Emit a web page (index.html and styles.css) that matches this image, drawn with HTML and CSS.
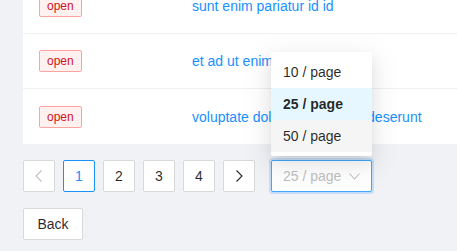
FILE: index.html
```html
<!DOCTYPE html>
<html>

<head>
    <title>Issues</title>
    <link rel="stylesheet" href="styles.css">
</head>

<body>
    <div class="page">
        <div class="table">
            <div class="row">
                <div class="cell"><span class="tag">open</span></div>
                <div class="cell"><a href="#">sunt enim pariatur id id</a></div>
            </div>
            <div class="row">
                <div class="cell"><span class="tag">open</span></div>
                <div class="cell"><a href="#">et ad ut enim minim</a></div>
            </div>
            <div class="row">
                <div class="cell"><span class="tag">open</span></div>
                <div class="cell"><a href="#">voluptate dolore cillum irure deserunt</a></div>
            </div>
        </div>

        <div class="pagination">
            <button class="page-item disabled">
                <svg width="8" height="12" viewBox="0 0 8 12"><polyline points="6.5,0.5 1,6 6.5,11.5" /></svg>
            </button>
            <button class="page-item active">1</button>
            <button class="page-item">2</button>
            <button class="page-item">3</button>
            <button class="page-item">4</button>
            <button class="page-item">
                <svg width="8" height="12" viewBox="0 0 8 12"><polyline points="1.5,0.5 7,6 1.5,11.5" /></svg>
            </button>

            <div class="size-select">
                <div class="select-box">
                    <span class="select-value">25 / page</span>
                    <svg class="select-arrow" width="11" height="7" viewBox="0 0 11 7"><polyline points="0.5,0.5 5.5,6 10.5,0.5" /></svg>
                </div>
                <ul class="dropdown">
                    <li>10 / page</li>
                    <li class="selected">25 / page</li>
                    <li class="hovered">50 / page</li>
                </ul>
            </div>
        </div>

        <button class="btn">Back</button>
    </div>
</body>

</html>
```

FILE: styles.css
```css
body {
    margin: 0;
    background: #f0f2f5;
    font-family: "Liberation Sans", Arial, sans-serif;
    font-size: 14px;
    color: rgba(0, 0, 0, 0.85);
    overflow: hidden;
}

.page {
    padding-left: 23px;
}

.table {
    background: #fff;
    margin-top: -21px;
}

.row {
    display: grid;
    grid-template-columns: 153px 1fr;
    border-bottom: 1px solid #f0f0f0;
}

.row:last-child {
    border-bottom: none;
}

.cell {
    padding: 16px;
    height: 22px;
    display: flex;
    align-items: center;
    white-space: nowrap;
}

.row:last-child .cell {
    height: 23px;
}

.tag {
    display: inline-block;
    box-sizing: border-box;
    height: 22px;
    line-height: 20px;
    padding: 0 7px;
    font-size: 12px;
    color: #cf1322;
    background: #fff1f0;
    border: 1px solid #ffa39e;
    border-radius: 2px;
}

a {
    color: #1890ff;
    text-decoration: none;
}

.pagination {
    display: flex;
    gap: 8px;
    margin-top: 16px;
}

.page-item {
    box-sizing: border-box;
    width: 32px;
    height: 32px;
    padding: 0;
    border: 1px solid #d9d9d9;
    border-radius: 2px;
    background: #fff;
    font-family: inherit;
    font-size: 14px;
    color: rgba(0, 0, 0, 0.85);
    display: flex;
    align-items: center;
    justify-content: center;
}

.page-item svg polyline {
    fill: none;
    stroke: rgba(0, 0, 0, 0.85);
    stroke-width: 1.1;
}

.page-item.disabled svg polyline {
    stroke: rgba(0, 0, 0, 0.25);
}

.page-item.active {
    border-color: #1890ff;
    color: #1890ff;
}

.size-select {
    position: relative;
    margin-left: 8px;
    width: 101px;
}

.select-box {
    box-sizing: border-box;
    height: 32px;
    padding: 0 11px;
    border: 1px solid #40a9ff;
    border-radius: 2px;
    background: #fff;
    box-shadow: 0 0 0 2px rgba(24, 144, 255, 0.2);
    display: flex;
    align-items: center;
    justify-content: space-between;
}

.select-value {
    color: #bfbfbf;
}

.select-arrow polyline {
    fill: none;
    stroke: #bfbfbf;
    stroke-width: 1.1;
}

.dropdown {
    position: absolute;
    left: 0;
    bottom: 36px;
    width: 101px;
    margin: 0;
    padding: 4px 0;
    list-style: none;
    background: #fff;
    border-radius: 2px;
    box-shadow: 0 3px 6px -4px rgba(0, 0, 0, 0.12), 0 6px 16px 0 rgba(0, 0, 0, 0.08), 0 9px 28px 8px rgba(0, 0, 0, 0.05);
}

.dropdown li {
    height: 32px;
    line-height: 32px;
    padding: 0 12px;
    white-space: nowrap;
}

.dropdown li.selected {
    background: #e6f7ff;
    font-weight: 600;
}

.dropdown li.hovered {
    background: #f5f5f5;
}

.btn {
    box-sizing: border-box;
    width: 60px;
    height: 32px;
    margin-top: 16px;
    padding: 0;
    border: 1px solid #d9d9d9;
    border-radius: 2px;
    background: #fff;
    font-family: inherit;
    font-size: 14px;
    color: rgba(0, 0, 0, 0.85);
}
```
